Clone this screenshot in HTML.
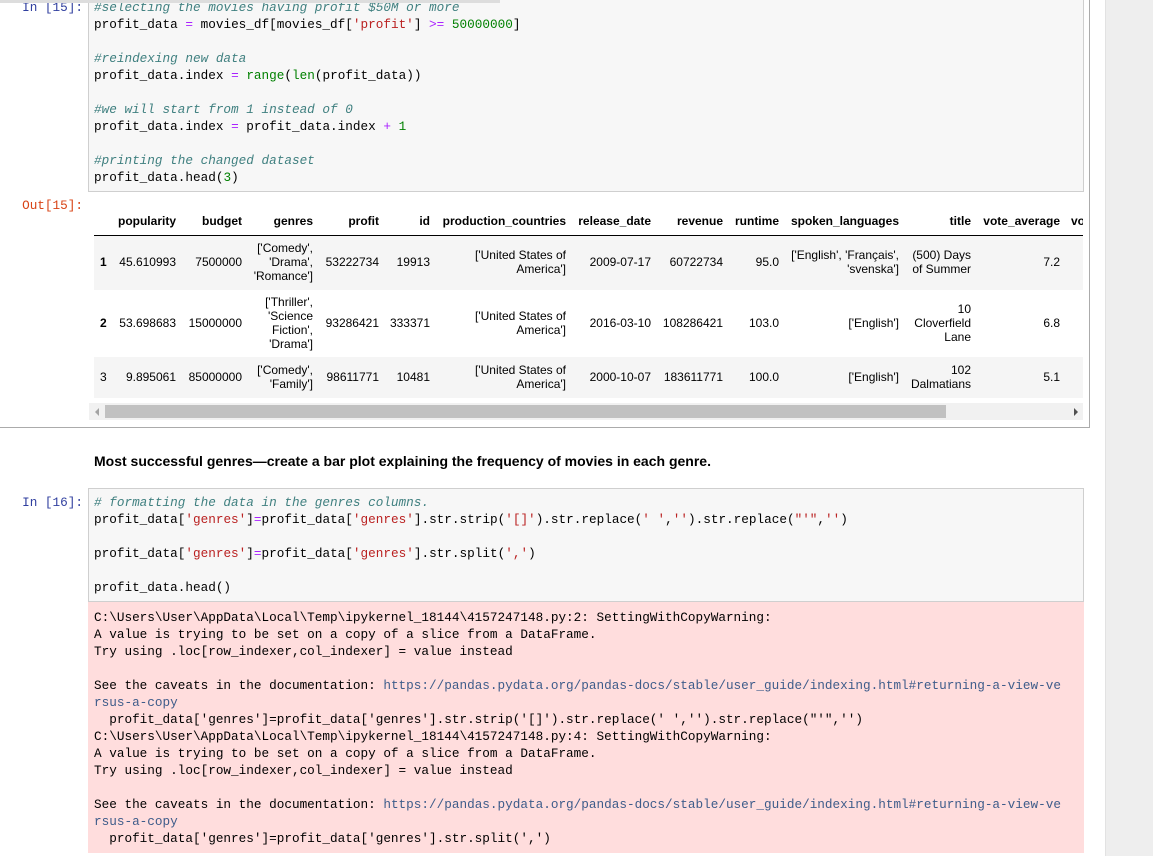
<!DOCTYPE html>
<html><head><meta charset="utf-8"><style>
*{margin:0;padding:0;box-sizing:border-box}
body{width:1153px;height:856px;overflow:hidden;background:#fff;position:relative;font-family:"Liberation Sans",Arial,sans-serif}
.a{position:absolute;white-space:pre}
.m{font-family:"Liberation Mono",monospace;font-size:12.7px;line-height:17px;color:#000}
.c{color:#408080;font-style:italic}
.s{color:#ba2121}
.o{color:#aa22ff}
.n{color:#008000}
.b{color:#008000}
.l{color:#3e5c8a}
.p{color:#303f9f;font-family:"Liberation Mono",monospace;font-size:12.7px;line-height:17px;width:83px;text-align:right;left:0}
.t{font-size:12px;line-height:14px;color:#000;text-align:right}
.h{font-weight:bold}
</style></head><body>
<div class="a" style="left:1105px;top:0;width:48px;height:856px;background:#eeeeee;border-left:1px solid #e2e2e2"></div>
<!-- cell 15 -->
<div class="a" style="left:0;top:0;width:1090px;height:428px;border-right:1px solid #ababab;border-bottom:1px solid #ababab"></div>
<div class="a" style="left:88px;top:-10px;width:996px;height:202px;background:#f7f7f7;border:1px solid #cfcfcf"></div>
<div class="a p" style="top:-1px">In [15]:</div>
<div class="a m" style="left:94px;top:-1px"><span class="c">#selecting the movies having profit $50M or more</span>
profit_data <span class="o">=</span> movies_df[movies_df[<span class="s">'profit'</span>] <span class="o">&gt;=</span> <span class="n">50000000</span>]

<span class="c">#reindexing new data</span>
profit_data.index <span class="o">=</span> <span class="b">range</span>(<span class="b">len</span>(profit_data))

<span class="c">#we will start from 1 instead of 0</span>
profit_data.index <span class="o">=</span> profit_data.index <span class="o">+</span> <span class="n">1</span>

<span class="c">#printing the changed dataset</span>
profit_data.head(<span class="n">3</span>)</div>
<div class="a" style="left:0;top:0;width:500px;height:3px;background:#ddd"></div>
<div class="a p" style="top:197px;color:#d84315">Out[15]:</div>
<!-- table -->
<div class="a" style="left:94px;top:235px;width:989px;height:1px;background:#000"></div>
<div class="a" style="left:94px;top:236px;width:989px;height:54px;background:#f5f5f5"></div>
<div class="a" style="left:94px;top:357px;width:989px;height:41px;background:#f5f5f5"></div>
<div style="position:absolute;left:0;top:0;width:1083px;height:430px;overflow:hidden">
<div class="a t h" style="right:907px;top:214px">popularity</div>
<div class="a t h" style="right:841px;top:214px">budget</div>
<div class="a t h" style="right:770px;top:214px">genres</div>
<div class="a t h" style="right:704px;top:214px">profit</div>
<div class="a t h" style="right:653px;top:214px">id</div>
<div class="a t h" style="right:517px;top:214px">production_countries</div>
<div class="a t h" style="right:432px;top:214px">release_date</div>
<div class="a t h" style="right:360px;top:214px">revenue</div>
<div class="a t h" style="right:304px;top:214px">runtime</div>
<div class="a t h" style="right:184px;top:214px">spoken_languages</div>
<div class="a t h" style="right:112px;top:214px">title</div>
<div class="a t h" style="right:23px;top:214px">vote_average</div>
<div class="a t h" style="left:1071px;top:214px;text-align:left">vote_count</div>
<!-- row1 -->
<div class="a t h" style="left:100px;top:255px;text-align:left">1</div>
<div class="a t" style="right:907px;top:255px">45.610993</div>
<div class="a t" style="right:841px;top:255px">7500000</div>
<div class="a t" style="right:770px;top:241px">['Comedy',
'Drama',
'Romance']</div>
<div class="a t" style="right:704px;top:255px">53222734</div>
<div class="a t" style="right:653px;top:255px">19913</div>
<div class="a t" style="right:517px;top:248px">['United States of
America']</div>
<div class="a t" style="right:432px;top:255px">2009-07-17</div>
<div class="a t" style="right:360px;top:255px">60722734</div>
<div class="a t" style="right:304px;top:255px">95.0</div>
<div class="a t" style="right:184px;top:248px">['English', 'Français',
'svenska']</div>
<div class="a t" style="right:112px;top:248px">(500) Days
of Summer</div>
<div class="a t" style="right:23px;top:255px">7.2</div>
<!-- row2 -->
<div class="a t h" style="left:100px;top:316px;text-align:left">2</div>
<div class="a t" style="right:907px;top:316px">53.698683</div>
<div class="a t" style="right:841px;top:316px">15000000</div>
<div class="a t" style="right:770px;top:295px">['Thriller',
'Science
Fiction',
'Drama']</div>
<div class="a t" style="right:704px;top:316px">93286421</div>
<div class="a t" style="right:653px;top:316px">333371</div>
<div class="a t" style="right:517px;top:309px">['United States of
America']</div>
<div class="a t" style="right:432px;top:316px">2016-03-10</div>
<div class="a t" style="right:360px;top:316px">108286421</div>
<div class="a t" style="right:304px;top:316px">103.0</div>
<div class="a t" style="right:184px;top:316px">['English']</div>
<div class="a t" style="right:112px;top:302px">10
Cloverfield
Lane</div>
<div class="a t" style="right:23px;top:316px">6.8</div>
<!-- row3 -->
<div class="a t" style="left:100px;top:370px;text-align:left">3</div>
<div class="a t" style="right:907px;top:370px">9.895061</div>
<div class="a t" style="right:841px;top:370px">85000000</div>
<div class="a t" style="right:770px;top:363px">['Comedy',
'Family']</div>
<div class="a t" style="right:704px;top:370px">98611771</div>
<div class="a t" style="right:653px;top:370px">10481</div>
<div class="a t" style="right:517px;top:363px">['United States of
America']</div>
<div class="a t" style="right:432px;top:370px">2000-10-07</div>
<div class="a t" style="right:360px;top:370px">183611771</div>
<div class="a t" style="right:304px;top:370px">100.0</div>
<div class="a t" style="right:184px;top:370px">['English']</div>
<div class="a t" style="right:112px;top:363px">102
Dalmatians</div>
<div class="a t" style="right:23px;top:370px">5.1</div>
</div>
<!-- scrollbar -->
<div class="a" style="left:89px;top:403px;width:994px;height:17px;background:#f1f1f1"></div>
<div class="a" style="left:105px;top:405px;width:841px;height:13px;background:#c1c1c1"></div>
<div class="a" style="left:95px;top:408px;width:0;height:0;border-top:4px solid transparent;border-bottom:4px solid transparent;border-right:4px solid #a3a3a3"></div>
<div class="a" style="left:1074px;top:408px;width:0;height:0;border-top:4px solid transparent;border-bottom:4px solid transparent;border-left:4px solid #505050"></div>
<!-- markdown -->
<div class="a" style="left:94px;top:453px;font-size:14px;font-weight:bold;line-height:17px;color:#000">Most successful genres—create a bar plot explaining the frequency of movies in each genre.</div>
<!-- cell 16 -->
<div class="a p" style="top:494px">In [16]:</div>
<div class="a" style="left:88px;top:488px;width:996px;height:114px;background:#f7f7f7;border:1px solid #cfcfcf"></div>
<div class="a m" style="left:94px;top:494px"><span class="c"># formatting the data in the genres columns.</span>
profit_data[<span class="s">'genres'</span>]<span class="o">=</span>profit_data[<span class="s">'genres'</span>].str.strip(<span class="s">'[]'</span>).str.replace(<span class="s">' '</span>,<span class="s">''</span>).str.replace(<span class="s">"'"</span>,<span class="s">''</span>)

profit_data[<span class="s">'genres'</span>]<span class="o">=</span>profit_data[<span class="s">'genres'</span>].str.split(<span class="s">','</span>)

profit_data.head()</div>
<div class="a" style="left:88px;top:602px;width:996px;height:251px;background:#fdd"></div>
<div class="a m" style="left:94px;top:609px">C:\Users\User\AppData\Local\Temp\ipykernel_18144\4157247148.py:2: SettingWithCopyWarning:
A value is trying to be set on a copy of a slice from a DataFrame.
Try using .loc[row_indexer,col_indexer] = value instead

See the caveats in the documentation: <span class="l">https://pandas.pydata.org/pandas-docs/stable/user_guide/indexing.html#returning-a-view-ve</span>
<span class="l">rsus-a-copy</span>
  profit_data['genres']=profit_data['genres'].str.strip('[]').str.replace(' ','').str.replace("'",'')
C:\Users\User\AppData\Local\Temp\ipykernel_18144\4157247148.py:4: SettingWithCopyWarning:
A value is trying to be set on a copy of a slice from a DataFrame.
Try using .loc[row_indexer,col_indexer] = value instead

See the caveats in the documentation: <span class="l">https://pandas.pydata.org/pandas-docs/stable/user_guide/indexing.html#returning-a-view-ve</span>
<span class="l">rsus-a-copy</span>
  profit_data['genres']=profit_data['genres'].str.split(',')</div>
</body></html>
